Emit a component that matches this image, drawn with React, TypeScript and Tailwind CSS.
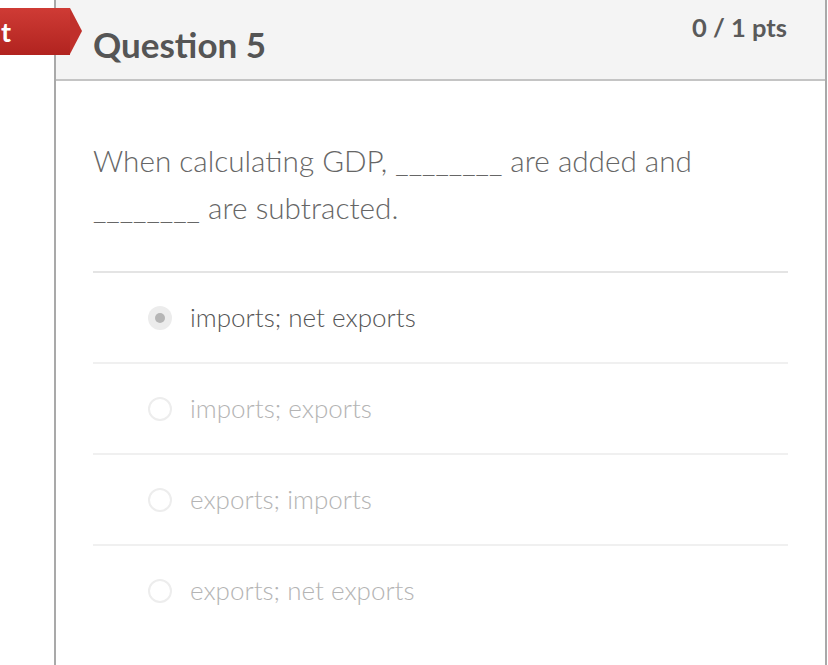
import { Fragment } from "react";

const answers = [
  { text: "imports; net exports", picked: true },
  { text: "imports; exports", picked: false },
  { text: "exports; imports", picked: false },
  { text: "exports; net exports", picked: false },
];

function Radio({ picked }: { picked: boolean }) {
  if (picked) {
    return (
      <div className="w-[24px] h-[24px] rounded-full bg-[#ececec] flex items-center justify-center shrink-0">
        <div className="w-[10px] h-[10px] rounded-full bg-[#b5b5b5]" />
      </div>
    );
  }
  return <div className="w-[24px] h-[24px] rounded-full border-2 border-[#ededed] shrink-0" />;
}

export default function App() {
  return (
    <div className="relative w-[828px] h-[665px] overflow-hidden bg-white flex font-['Lato','Open_Sans',sans-serif]">
      {/* gutter */}
      <div className="w-[54px] shrink-0" />

      {/* Question card */}
      <div className="flex-1 flex flex-col border-l-2 border-r-2 border-[#a9a9a9] mr-[1px]">
        <div className="h-[81px] bg-[#f4f4f4] border-b-2 border-[#c4c4c4] flex justify-between pl-[37px] pr-[38px] shrink-0">
          <h2 className="text-[35px] font-bold text-[#555] pt-[19px] leading-[50px]">Question 5</h2>
          <div className="text-[25.5px] font-bold text-[#5a5a5a] pt-[10px] leading-[34px]">0 / 1 pts</div>
        </div>

        <div className="px-[37px]">
          <p className="text-[29.7px] font-light text-[#666] leading-[47px] pt-[56px] pb-[40px]">
            When calculating GDP, ________ are added and
            <br />
            ________ are subtracted.
          </p>
          <div className="h-[2px] bg-[#e4e4e4]" />

          {answers.map((a, i) => (
            <Fragment key={a.text}>
              {i > 0 && <div className="h-[2px] bg-[#f0f0f0]" />}
              <div className="h-[89px] flex items-center pl-[55px] gap-[18px]">
                <Radio picked={a.picked} />
                <span
                  className={
                    a.picked
                      ? "text-[26px] font-light text-[#555]"
                      : "text-[26px] font-light text-[#b4b4b4]"
                  }
                >
                  {a.text}
                </span>
              </div>
            </Fragment>
          ))}
        </div>
      </div>

      {/* red marker */}
      <div className="absolute left-0 top-[8px] h-[47px] w-[70px] bg-gradient-to-b from-[#cf3b35] to-[#b1231f] flex items-center">
        <span className="pl-[1px] text-white font-bold text-[27px] leading-none">t</span>
      </div>
      <div className="absolute left-[70px] top-[8px] w-0 h-0 border-t-[23.5px] border-b-[23.5px] border-l-[12px] border-t-transparent border-b-transparent border-l-[#c0302b]" />
    </div>
  );
}
